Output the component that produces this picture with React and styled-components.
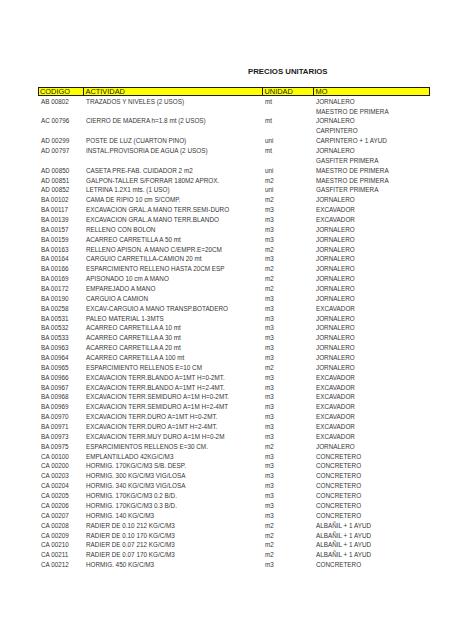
import React from "react";
import styled, { createGlobalStyle } from "styled-components";

const Global = createGlobalStyle`
  html, body { margin: 0; padding: 0; background: #fff; }
  body { font-family: "Liberation Sans", Arial, sans-serif; }
`;

const Page = styled.div`
  width: 474px;
  height: 632px;
  box-sizing: border-box;
  padding: 67px 0 0 38px;
  background: #fff;
  overflow: hidden;
`;

const Title = styled.div`
  margin-left: 210px;
  height: 10px;
  line-height: 10px;
  font-size: 7.8px;
  font-weight: bold;
  color: #1a1a1a;
  white-space: nowrap;
`;

const cols = "44px 179px 51px 116px";

const HeaderRow = styled.div`
  margin-top: 9.7px;
  display: grid;
  grid-template-columns: ${cols};
  width: 392px;
  height: 9px;
  box-sizing: border-box;
  border: 1px solid #1c1c1c;
  background: #ffff00;
`;

const HeaderCell = styled.div`
  padding-left: ${(p) => (p.$first ? 1 : 1.5)}px;
  border-left: ${(p) => (p.$first ? "none" : "1px solid #1c1c1c")};
  font-size: 7.4px;
  line-height: 7px;
  color: #222214;
  white-space: nowrap;
  overflow: hidden;
`;

const Body = styled.div`
  width: 392px;
  margin-top: 1px;
`;

const Row = styled.div`
  display: grid;
  grid-template-columns: 46px 179px 51px 116px;
  height: 9.86px;
  line-height: 9.86px;
  font-size: 6.35px;
  color: #363636;
  margin-left: -1px;
`;

const Cell = styled.div`
  padding-left: ${(p) => p.$pad}px;
  white-space: nowrap;
  overflow: visible;
`;

const rows = [
  ["AB 00802", "TRAZADOS Y NIVELES (2 USOS)", "mt", "JORNALERO"],
  ["", "", "", "MAESTRO DE PRIMERA"],
  ["AC 00796", "CIERRO DE MADERA h=1.8 mt  (2 USOS)", "mt", "JORNALERO"],
  ["", "", "", "CARPINTERO"],
  ["AD 00299", "POSTE DE LUZ (CUARTON PINO)", "uni", "CARPINTERO + 1 AYUD"],
  ["AD 00797", "INSTAL.PROVISORIA DE AGUA (2 USOS)", "mt", "JORNALERO"],
  ["", "", "", "GASFITER PRIMERA"],
  ["AD 00850", "CASETA PRE-FAB. CUIDADOR 2 m2", "uni", "MAESTRO DE PRIMERA"],
  ["AD 00851", "GALPON-TALLER S/FORRAR 180M2 APROX.", "m2", "MAESTRO DE PRIMERA"],
  ["AD 00852", "LETRINA 1.2X1 mts. (1 USO)", "uni", "GASFITER PRIMERA"],
  ["BA 00102", "CAMA DE RIPIO 10 cm S/COMP.", "m2", "JORNALERO"],
  ["BA 00117", "EXCAVACION GRAL.A MANO TERR.SEMI-DURO", "m3", "EXCAVADOR"],
  ["BA 00139", "EXCAVACION GRAL.A MANO TERR.BLANDO", "m3", "EXCAVADOR"],
  ["BA 00157", "RELLENO CON BOLON", "m3", "JORNALERO"],
  ["BA 00159", "ACARREO CARRETILLA A 50 mt", "m3", "JORNALERO"],
  ["BA 00163", "RELLENO APISON. A MANO C/EMPR.E=20CM", "m2", "JORNALERO"],
  ["BA 00164", "CARGUIO CARRETILLA-CAMION 20 mt", "m3", "JORNALERO"],
  ["BA 00166", "ESPARCIMIENTO RELLENO HASTA 20CM ESP", "m2", "JORNALERO"],
  ["BA 00169", "APISONADO 10 cm A MANO", "m2", "JORNALERO"],
  ["BA 00172", "EMPAREJADO A MANO", "m2", "JORNALERO"],
  ["BA 00190", "CARGUIO A CAMION", "m3", "JORNALERO"],
  ["BA 00258", "EXCAV-CARGUIO A MANO TRANSP.BOTADERO", "m3", "EXCAVADOR"],
  ["BA 00531", "PALEO MATERIAL 1-3MTS", "m3", "JORNALERO"],
  ["BA 00532", "ACARREO CARRETILLA A 10 mt", "m3", "JORNALERO"],
  ["BA 00533", "ACARREO CARRETILLA A 30 mt", "m3", "JORNALERO"],
  ["BA 00963", "ACARREO CARRETILLA A 20 mt", "m3", "JORNALERO"],
  ["BA 00964", "ACARREO CARRETILLA  A 100 mt", "m3", "JORNALERO"],
  ["BA 00965", "ESPARCIMIENTO RELLENOS E=10 CM", "m2", "JORNALERO"],
  ["BA 00966", "EXCAVACION TERR.BLANDO A=1MT H=0-2MT.", "m3", "EXCAVADOR"],
  ["BA 00967", "EXCAVACION TERR.BLANDO A=1MT H=2-4MT.", "m3", "EXCAVADOR"],
  ["BA 00968", "EXCAVACION TERR.SEMIDURO A=1M H=0-2MT.", "m3", "EXCAVADOR"],
  ["BA 00969", "EXCAVACION TERR.SEMIDURO A=1M H=2-4MT", "m3", "EXCAVADOR"],
  ["BA 00970", "EXCAVACION TERR.DURO A=1MT H=0-2MT.", "m3", "EXCAVADOR"],
  ["BA 00971", "EXCAVACION TERR.DURO A=1MT H=2-4MT.", "m3", "EXCAVADOR"],
  ["BA 00973", "EXCAVACION TERR.MUY DURO A=1M H=0-2M", "m3", "EXCAVADOR"],
  ["BA 00975", "ESPARCIMIENTOS RELLENOS E=30 CM.", "m2", "JORNALERO"],
  ["CA 00100", "EMPLANTILLADO 42KG/C/M3", "m3", "CONCRETERO"],
  ["CA 00200", "HORMIG. 170KG/C/M3 S/B. DESP.", "m3", "CONCRETERO"],
  ["CA 00203", "HORMIG. 300 KG/C/M3 VIG/LOSA", "m3", "CONCRETERO"],
  ["CA 00204", "HORMIG. 340 KG/C/M3 VIG/LOSA", "m3", "CONCRETERO"],
  ["CA 00205", "HORMIG. 170KG/C/M3 0.2 B/D.", "m3", "CONCRETERO"],
  ["CA 00206", "HORMIG. 170KG/C/M3 0.3 B/D.", "m3", "CONCRETERO"],
  ["CA 00207", "HORMIG. 140 KG/C/M3", "m3", "CONCRETERO"],
  ["CA 00208", "RADIER DE 0.10 212 KG/C/M3", "m2", "ALBAÑIL + 1 AYUD"],
  ["CA 00209", "RADIER DE 0.10 170 KG/C/M3", "m2", "ALBAÑIL + 1 AYUD"],
  ["CA 00210", "RADIER DE 0.07 212 KG/C/M3", "m2", "ALBAÑIL + 1 AYUD"],
  ["CA 00211", "RADIER DE 0.07 170 KG/C/M3", "m2", "ALBAÑIL + 1 AYUD"],
  ["CA 00212", "HORMIG. 450 KG/C/M3", "m3", "CONCRETERO"],
];

export default function App() {
  return (
    <>
      <Global />
      <Page>
        <Title>PRECIOS UNITARIOS</Title>
        <HeaderRow>
          <HeaderCell $first>CODIGO</HeaderCell>
          <HeaderCell>ACTIVIDAD</HeaderCell>
          <HeaderCell>UNIDAD</HeaderCell>
          <HeaderCell>MO</HeaderCell>
        </HeaderRow>
        <Body>
          {rows.map((r, i) => (
            <Row key={i}>
              <Cell $pad={4}>{r[0]}</Cell>
              <Cell $pad={3}>{r[1]}</Cell>
              <Cell $pad={3}>{r[2]}</Cell>
              <Cell $pad={3}>{r[3]}</Cell>
            </Row>
          ))}
        </Body>
      </Page>
    </>
  );
}
